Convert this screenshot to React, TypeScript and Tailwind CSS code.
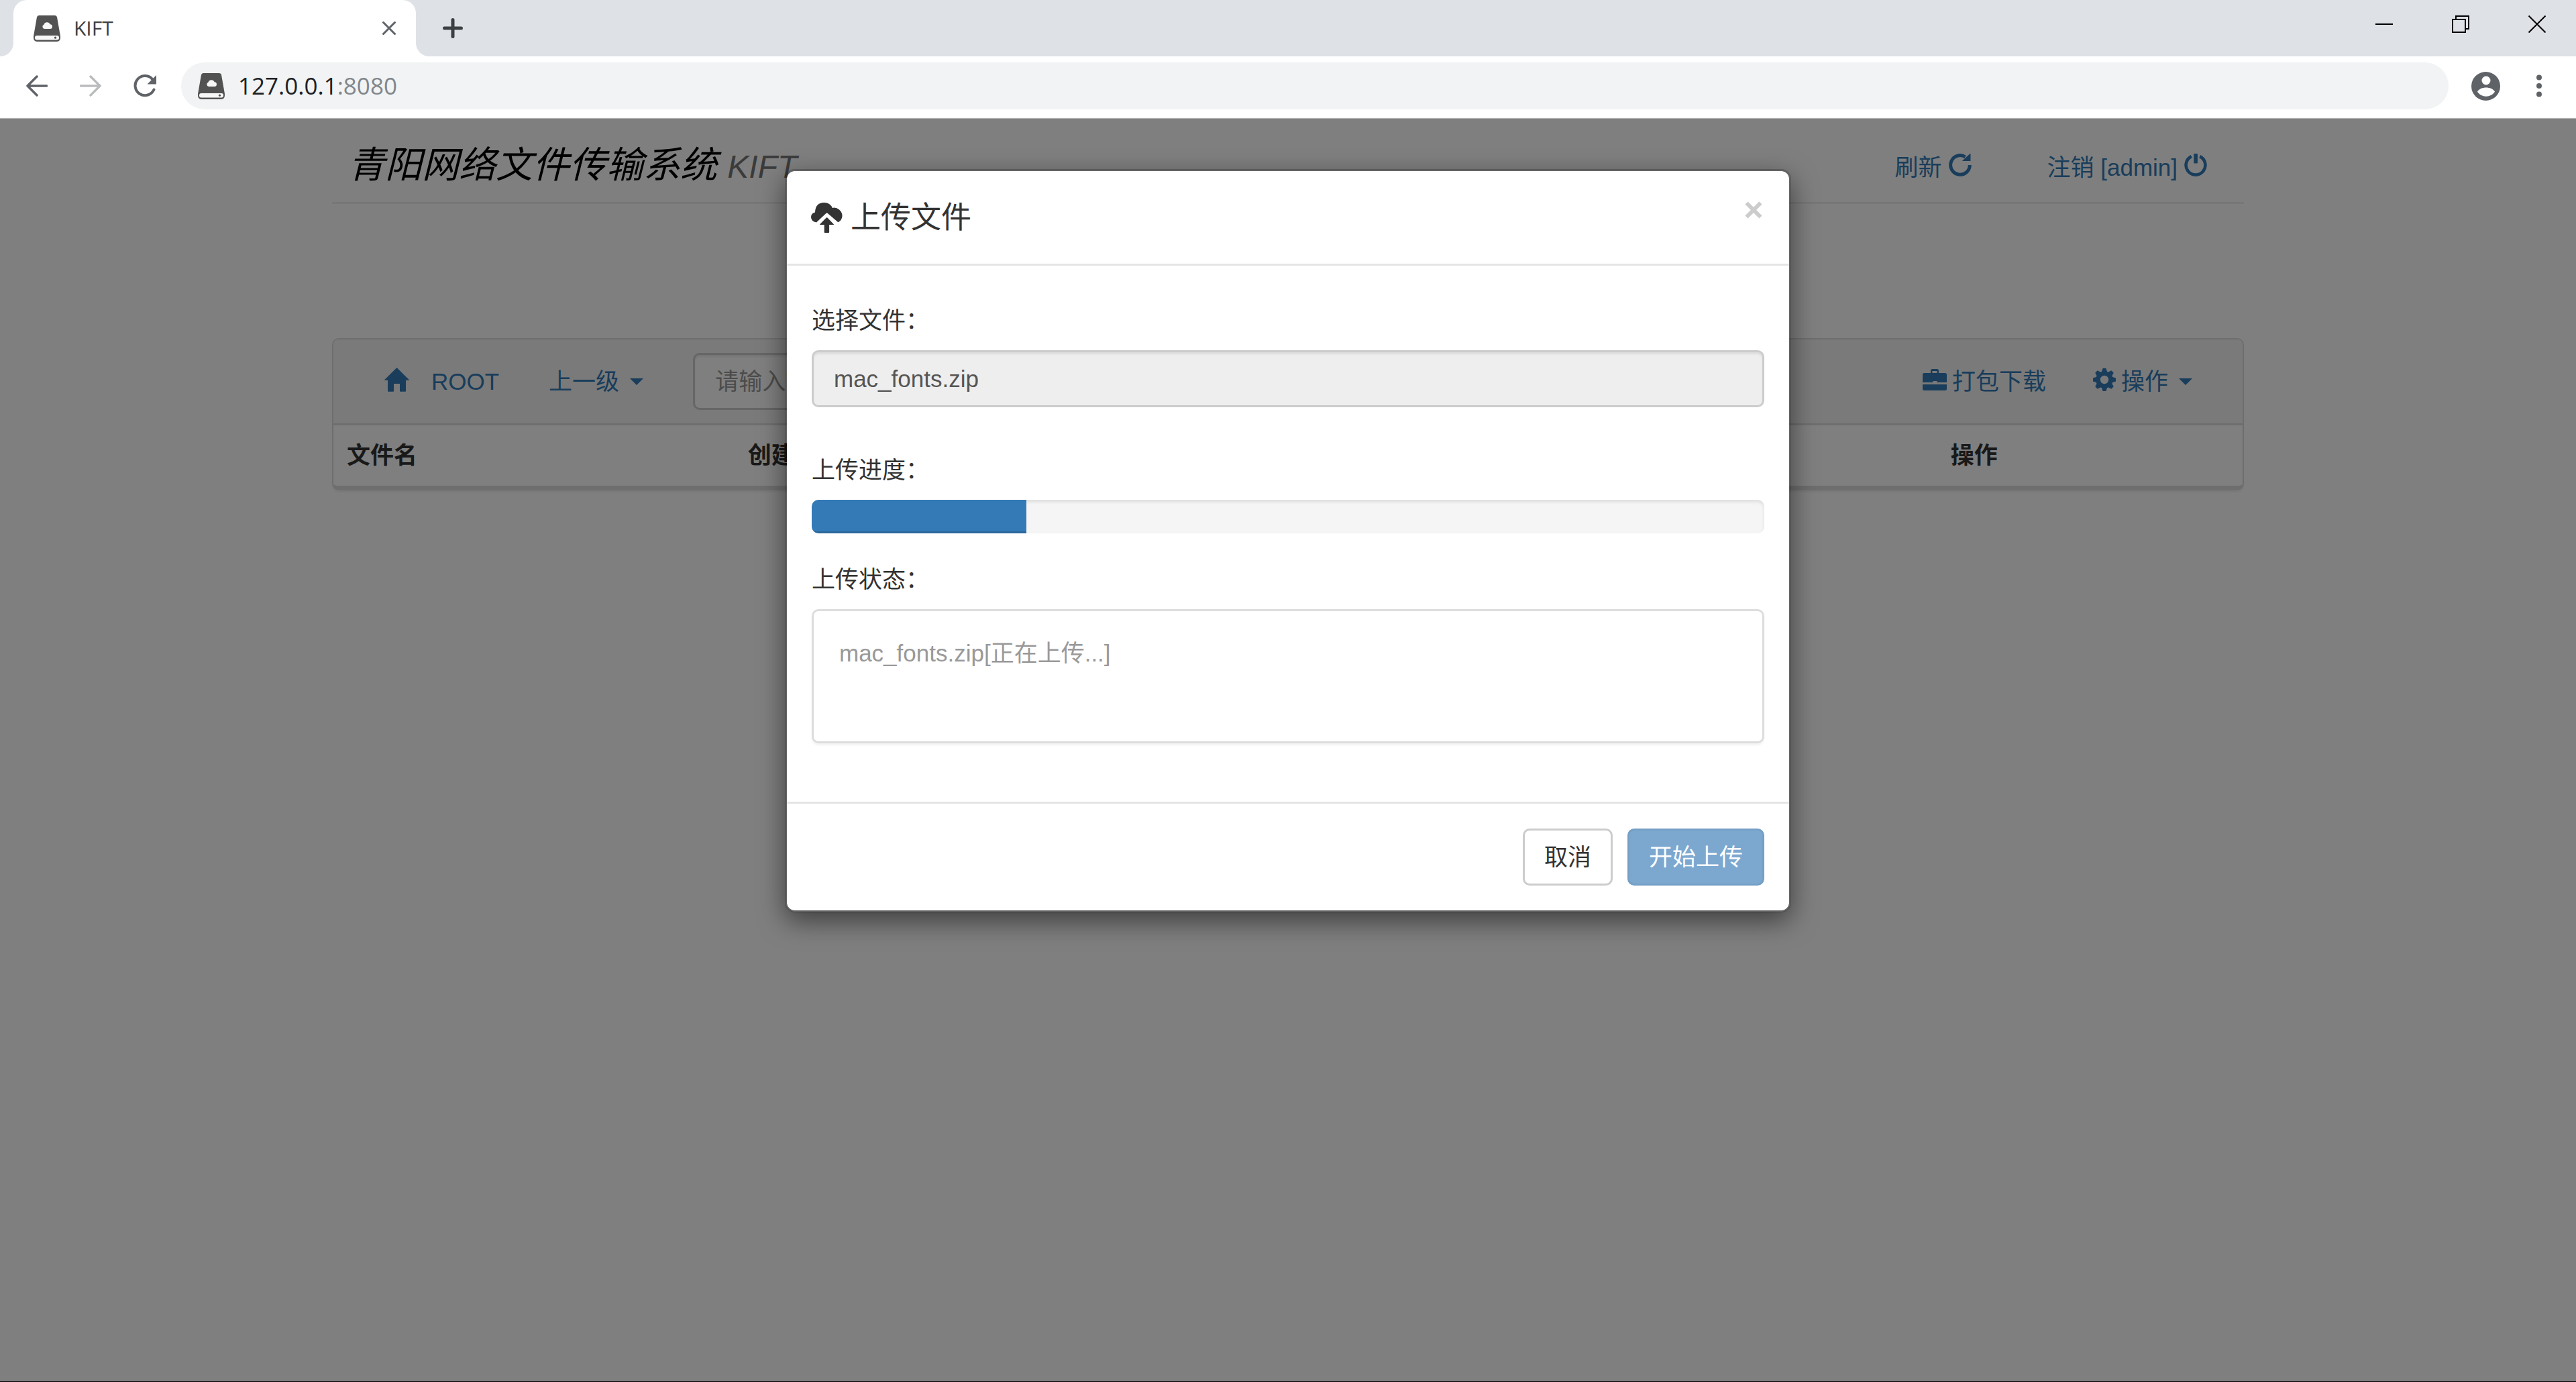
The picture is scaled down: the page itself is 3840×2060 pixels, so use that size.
import React from "react";

type IconProps = { className?: string };

function DriveIcon({ className }: IconProps) {
  return (
    <svg viewBox="0 0 40 39" className={className} aria-hidden="true">
      <path d="M8 0h24q2.500 0 3 2.500L40 31v2q0 6-6 6H6q-6 0-6-6v-2L5 2.500Q5.500 0 8 0z" fill="#525252" />
      <rect x="2" y="30" width="36" height="6.500" rx="3" fill="#f7f7f7" />
      <circle cx="32.500" cy="33.200" r="1.600" fill="#525252" />
      <path d="M16 20a3.300 3.300 0 0 1-.6-6.300 5 5 0 0 1 9.300-.4A3.300 3.300 0 0 1 24.500 20z" fill="#f7f7f7" />
    </svg>
  );
}

function HomeIcon() {
  return (
    <svg viewBox="0 0 37 36" className="mb-1.5 h-9 w-[37px]" fill="currentColor" aria-hidden="true">
      <path d="M18 .4q.5-.5 1 0L36.700 18q.5.800-.3.800H32V35q0 .8-.8.800h-7.400q-.8 0-.8-.8V24h-9v11q0 .8-.8.800H5.800Q5 35.800 5 35V18.800H.6q-.8 0-.3-.8z" />
    </svg>
  );
}

function RefreshIcon() {
  return (
    <svg viewBox="0 0 34 34" className="mt-1 h-[34px] w-[34px]" aria-hidden="true">
      <path d="M31.300 17A14.300 14.300 0 1 1 24.500 4.800" fill="none" stroke="currentColor" strokeWidth="5" />
      <path d="M32.500.2v10.200q0 .6-.6.600H20.700q-.8 0-.2-.7L31.500.2q.8-.8 1 0z" fill="currentColor" />
    </svg>
  );
}

function PowerIcon() {
  return (
    <svg viewBox="0 0 34 34" className="mt-1 h-[34px] w-[34px]" aria-hidden="true">
      <path d="M10.800 4.200A14.400 14.400 0 1 0 23.200 4.200" fill="none" stroke="currentColor" strokeWidth="4.600" />
      <rect x="14.300" y="0" width="5.600" height="14.500" rx="1" fill="currentColor" />
    </svg>
  );
}

function BriefcaseIcon() {
  return (
    <svg viewBox="0 0 36 32" className="mb-1.5 h-8 w-9" fill="currentColor" aria-hidden="true">
      <path fillRule="evenodd" d="M12 6V2.500Q12 0 14.500 0h7Q24 0 24 2.500V6h9.500Q36 6 36 8.500V20H21.500v-2h-6v2H0V8.500Q0 6 2.500 6zM14.500 6h7V3h-7z" />
      <path d="M0 23h36v6.500q0 2.500-2.500 2.500h-31Q0 32 0 29.500z" />
    </svg>
  );
}

function CogIcon() {
  return (
    <svg viewBox="-17 -17 34 34" className="mb-1.5 h-[34px] w-[34px]" fill="currentColor" aria-hidden="true">
      <path fillRule="evenodd" d="M0-12.800A12.800 12.800 0 1 1 0 12.800 12.800 12.800 0 0 1 0-12.800zM0-6.200A6.200 6.200 0 1 0 0 6.200 6.200 6.200 0 0 0 0-6.200z" />
      {[0, 45, 90, 135, 180, 225, 270, 315].map((a) => (
        <path key={a} d="M-4.200-11.500L-2.400-17H2.400L4.200-11.500z" transform={`rotate(${a})`} />
      ))}
    </svg>
  );
}

function CloudUploadIcon() {
  return (
    <svg viewBox="0 0 47 45" className="h-[45px] w-[47px]" fill="currentColor" aria-hidden="true">
      <path d="M8 29.500Q0 28 0 21.500q0-5.500 6-7Q6.500 0 19.500 0q9 0 12.300 8Q37 6.500 42 10.500q5 4.500 4.500 10-.6 6-6.200 8.700L24.800 16q-1.200-1-2.400 0z" />
      <path d="M24.400 22.600l9.400 9.600q.7.900-.5.900h-6.200v10.900q0 1-1 1h-5.400q-1 0-1-1V33.100h-6q-1.200 0-.5-.9l9.600-9.600q.8-.7 1.600 0z" />
    </svg>
  );
}

function Caret() {
  return (
    <svg viewBox="0 0 20 10" className="h-[10px] w-5" fill="currentColor" aria-hidden="true">
      <path d="M0 0h20L10 10z" />
    </svg>
  );
}

function TabStrip() {
  return (
    <div className="flex h-[84px] items-stretch bg-[#dee1e6]">
      <div className="w-5 bg-white">
        <div className="h-full rounded-br-[20px] bg-[#dee1e6]" />
      </div>
      <div className="flex w-[600px] items-center bg-[#dee1e6]">
        <div className="flex h-full w-full items-center rounded-t-[20px] bg-white pr-[30px] pl-[30px]">
          <DriveIcon className="h-[39px] w-10" />
          <span className="ml-5 flex-1 font-['Open_Sans',sans-serif] text-[30px] leading-10 text-[#3c4043]">KIFT</span>
          <button aria-label="关闭标签页" className="text-[#5f6368]">
            <svg viewBox="0 0 20 20" className="h-5 w-5" fill="none" stroke="currentColor" strokeWidth="3" strokeLinecap="round">
              <path d="M1.500 1.500l17 17M18.500 1.500l-17 17" />
            </svg>
          </button>
        </div>
      </div>
      <div className="w-5 bg-white">
        <div className="h-full rounded-bl-[20px] bg-[#dee1e6]" />
      </div>
      <button aria-label="新标签页" className="ml-5 text-[#3c4043]">
        <svg viewBox="0 0 30 30" className="h-[30px] w-[30px]" fill="none" stroke="currentColor" strokeWidth="5" strokeLinecap="round">
          <path d="M15 2.500v25M2.500 15h25" />
        </svg>
      </button>
      <div className="ml-auto flex items-center gap-[88px] pr-[45px] pb-3 text-black">
        <button aria-label="最小化">
          <svg viewBox="0 0 26 26" className="h-[26px] w-[26px]" stroke="currentColor" strokeWidth="2">
            <path d="M0 13h26" />
          </svg>
        </button>
        <button aria-label="还原">
          <svg viewBox="0 0 26 26" className="h-[26px] w-[26px]" fill="none" stroke="currentColor" strokeWidth="2">
            <path d="M1 6h19v19H1zM6 6V1h19v19h-5" />
          </svg>
        </button>
        <button aria-label="关闭">
          <svg viewBox="0 0 26 26" className="h-[26px] w-[26px]" stroke="currentColor" strokeWidth="2">
            <path d="M.5.500l25 25M25.500.500l-25 25" />
          </svg>
        </button>
      </div>
    </div>
  );
}

function AddressBar() {
  return (
    <div className="flex h-[93px] items-center border-b border-[#b4b4b4] bg-white pr-[51px] pb-1 pl-[39px]">
      <button aria-label="后退" className="text-[#5f6368]">
        <svg viewBox="0 0 32 32" className="h-8 w-8" fill="none" stroke="currentColor" strokeWidth="3.500" strokeLinecap="round" strokeLinejoin="round">
          <path d="M30.500 16H2M16 2L2 16l14 14" />
        </svg>
      </button>
      <button aria-label="前进" className="ml-12 text-[#babcbe]">
        <svg viewBox="0 0 32 32" className="h-8 w-8" fill="none" stroke="currentColor" strokeWidth="3.500" strokeLinecap="round" strokeLinejoin="round">
          <path d="M1.500 16H30M16 2l14 14-14 14" />
        </svg>
      </button>
      <button aria-label="重新加载" className="ml-12 text-[#5f6368]">
        <svg viewBox="0 0 34 34" className="h-[34px] w-[34px]">
          <path d="M30.500 22.500A14.600 14.600 0 1 1 28 6.800" fill="none" stroke="currentColor" strokeWidth="4" strokeLinecap="round" />
          <path d="M34 1v13.500H20.500z" fill="currentColor" />
        </svg>
      </button>
      <div className="ml-[37px] flex h-[70px] flex-1 items-center rounded-full bg-[#f1f3f4] pl-[25px] font-['Open_Sans',sans-serif] text-[35px] leading-[50px]">
        <DriveIcon className="h-[39px] w-10" />
        <span className="ml-5 text-[#202124]">127.0.0.1</span>
        <span className="text-[#80868b]">:8080</span>
      </div>
      <button aria-label="用户" className="ml-[34px] text-[#5f6368]">
        <svg viewBox="0 0 43 43" className="h-[43px] w-[43px]" fill="currentColor">
          <path fillRule="evenodd" d="M21.500 0a21.500 21.500 0 1 1 0 43 21.500 21.500 0 0 1 0-43zM22 6.500a6.500 6.500 0 1 0 0 13 6.500 6.500 0 0 0 0-13zM9 29.500c5 9.500 21 9.500 26 0-5-8-21-8-26 0z" />
        </svg>
      </button>
      <button aria-label="更多" className="ml-[54px] text-[#5f6368]">
        <svg viewBox="0 0 8 34" className="h-[34px] w-2" fill="currentColor">
          <circle cx="4" cy="4.500" r="4" />
          <circle cx="4" cy="17" r="4" />
          <circle cx="4" cy="29.500" r="4" />
        </svg>
      </button>
    </div>
  );
}

function FilePage() {
  return (
    <div className="mx-auto w-full max-w-[2850px]">
      <header className="flex items-start justify-between border-b-3 border-[#eee] pt-9 pr-[55px] pb-[19px] pl-6">
        <h3 className="text-[55px] leading-[67px] text-black italic">
          青阳网络文件传输系统{" "}
          <small className="font-['Liberation_Sans',sans-serif] text-[48px] text-[#777]">KIFT</small>
        </h3>
        <nav className="flex gap-[113px] pt-3 text-[#337ab7]">
          <a href="#refresh" className="flex gap-[10px]">
            刷新
            <RefreshIcon />
          </a>
          <a href="#logout" className="flex gap-[10px]">
            注销 [admin]
            <PowerIcon />
          </a>
        </nav>
      </header>
      <section className="mt-[200px] overflow-hidden rounded-[10px] border-2 border-b-[7px] border-[#ddd] shadow-[0_3px_3px_rgba(0,0,0,0.05)]">
        <div className="flex items-center border-b-3 border-[#ddd] bg-[#f5f5f5] pt-5 pr-[75px] pb-5 pl-[76px] text-[#337ab7]">
          <a href="#root" className="flex items-center gap-[33px]">
            <HomeIcon />
            ROOT
          </a>
          <a href="#up" className="ml-[74px] flex items-center gap-4">
            上一级
            <Caret />
          </a>
          <input
            aria-label="搜索文件"
            placeholder="请输入文件名..."
            className="ml-[74px] h-[85px] w-[500px] rounded-[10px] border-3 border-[#ccc] bg-white px-[30px] text-[#555] shadow-[inset_0_3px_3px_rgba(0,0,0,0.075)] placeholder:text-[#999]"
          />
          <a href="#package" className="ml-auto flex items-center gap-2">
            <BriefcaseIcon />
            打包下载
          </a>
          <a href="#actions" className="ml-[70px] flex items-center gap-2">
            <CogIcon />
            操作
            <span className="ml-2">
              <Caret />
            </span>
          </a>
        </div>
        <table className="w-full table-fixed bg-white text-left text-[#333]">
          <thead>
            <tr>
              <th className="w-[21%] p-5 font-bold">文件名</th>
              <th className="w-[21%] p-5 font-bold">创建日期</th>
              <th className="w-[21%] p-5 font-bold">文件大小</th>
              <th className="w-[21%] p-5 font-bold">创建者</th>
              <th className="w-[16%] p-5 font-bold">操作</th>
            </tr>
          </thead>
        </table>
      </section>
    </div>
  );
}

function UploadDialog() {
  return (
    <div
      role="dialog"
      aria-labelledby="upload-title"
      className="w-full max-w-[1500px] rounded-[15px] border-3 border-black/20 bg-white bg-clip-padding text-[#333] shadow-[0_13px_38px_rgba(0,0,0,0.5)]"
    >
      <div className="flex items-start justify-between border-b-3 border-[#e5e5e5] pt-[37px] pr-10 pb-9 pl-9">
        <h4 id="upload-title" className="flex items-center gap-3 text-[45px] leading-[65px]">
          <CloudUploadIcon />
          上传文件
        </h4>
        <button aria-label="关闭" className="mt-2 text-[#ccc]">
          <svg viewBox="0 0 26 26" className="h-[26px] w-[26px]" stroke="currentColor" strokeWidth="6">
            <path d="M2.500 2.500l21 21M23.500 2.500l-21 21" />
          </svg>
        </button>
      </div>
      <div className="px-[37px] pt-[57px] pb-[87px]">
        <label htmlFor="file" className="block">
          选择文件：
        </label>
        <input
          id="file"
          readOnly
          value="mac_fonts.zip"
          className="mt-[19px] block h-[85px] w-full rounded-[10px] border-3 border-[#ccc] bg-[#eee] px-[30px] text-[#555] shadow-[inset_0_3px_3px_rgba(0,0,0,0.075)]"
        />
        <div className="mt-[69px]">上传进度：</div>
        <div
          role="progressbar"
          aria-label="上传进度"
          aria-valuenow={22}
          className="mt-[19px] h-[50px] overflow-hidden rounded-[10px] bg-[#f5f5f5] shadow-[inset_0_3px_5px_rgba(0,0,0,0.1)]"
        >
          <div className="h-full bg-[#337ab7] shadow-[inset_0_-3px_0_rgba(0,0,0,0.15)]" style={{ width: "22.5%" }} />
        </div>
        <div className="mt-11">上传状态：</div>
        <div className="mt-[19px] h-[200px] rounded-[10px] border-3 border-[#ddd] p-[38px] text-[#999] shadow-[0_3px_3px_rgba(0,0,0,0.05)]">
          mac_fonts.zip[正在上传...]
        </div>
      </div>
      <div className="flex justify-end gap-[22px] border-t-3 border-[#e5e5e5] p-[37px]">
        <button className="h-[85px] rounded-[10px] border-3 border-[#ccc] bg-white px-[29px]">取消</button>
        <button className="h-[85px] rounded-[10px] border-3 border-[#759fc5] bg-[#7ca8d0] px-[29px] text-white">开始上传</button>
      </div>
    </div>
  );
}

export default function App() {
  return (
    <div className="flex min-h-screen flex-col border-b border-black bg-white font-['Liberation_Sans','Noto_Sans_CJK_SC',sans-serif] text-[35px] leading-[50px]">
      <TabStrip />
      <AddressBar />
      <main className="relative flex-1">
        <FilePage />
        <div className="absolute inset-0 flex items-start justify-center bg-black/50 pt-[75px]">
          <UploadDialog />
        </div>
      </main>
    </div>
  );
}
